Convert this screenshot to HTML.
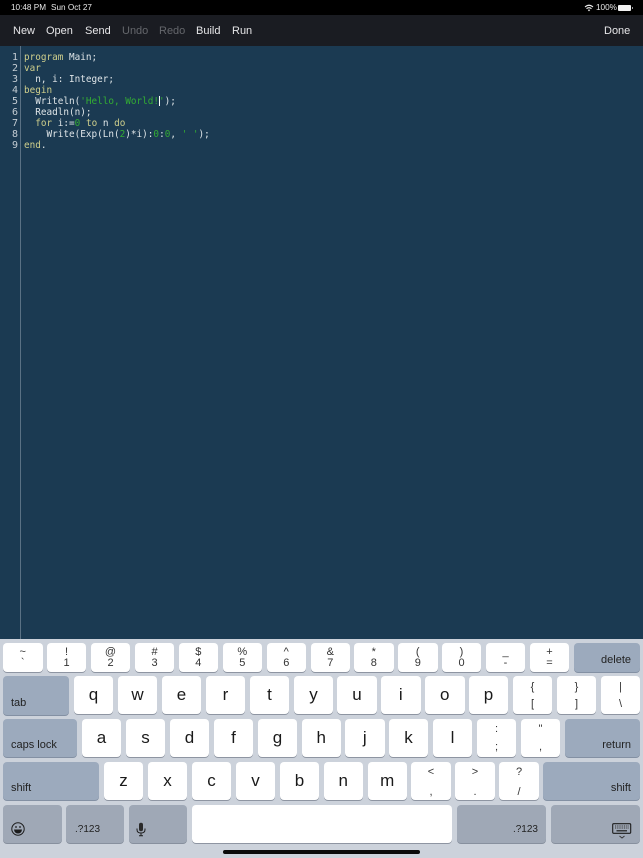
<!DOCTYPE html>
<html><head><meta charset="utf-8"><style>
html,body{margin:0;padding:0;background:#1b3a52}
#r{position:relative;width:643px;height:858px;overflow:hidden;background:#1b3a52;font-family:"Liberation Sans",sans-serif;filter:blur(.3px)}
#r div{position:absolute}
.s{color:#e8e8e8;font-size:8.2px;line-height:10px;top:3px;white-space:nowrap}
.t{color:#e6e6e8;font-size:11px;line-height:14px;top:24px;white-space:nowrap}
.code{left:24px;top:52px;font-family:"DejaVu Sans Mono",monospace;font-size:9.35px;line-height:11px;color:#dfe5e8;white-space:pre}
.nums{left:0;width:18px;top:52px;text-align:right;font-family:"DejaVu Sans Mono",monospace;font-size:10px;line-height:11px;color:#c3ccd3;white-space:pre}
b{font-weight:normal;color:#cfcf8c}i{font-style:normal;color:#33ad33}
.k{background:#fff;border-radius:4px;box-shadow:0 1px 0 #8e95a2;color:#1a1a1a;text-align:center;font-size:17px;line-height:37px}
.g{background:#9caabd;border-radius:4px;box-shadow:0 1px 0 #8390a3}
.d{background:#9fa8b6;border-radius:4px;box-shadow:0 1px 0 #87909e}
.l{color:#222;font-size:11px;line-height:14px;white-space:nowrap}
.n{font-size:10px}
.u,.v{left:0;right:0;text-align:center;font-size:11px;line-height:12px;color:#333}
.r1 .u{top:3px}.r1 .v{top:14px}
.r2 .u{top:5px}.r2 .v{top:22px;}
.r3 .u{top:4px}.r3 .v{top:22px}
.r4 .u{top:4px}.r4 .v{top:24px}
</style></head><body><div id="r">
<div style="left:0;top:0;width:643px;height:15px;background:#000"></div>
<div style="left:0;top:15px;width:643px;height:31px;background:#1a1c22"></div>
<div class="s" style="left:11px">10:48 PM</div><div class="s" style="left:51px">Sun Oct 27</div>
<svg style="position:absolute;left:584px;top:4px" width="10" height="8" viewBox="0 0 10 8"><path d="M1 3Q5-.5 9 3M2.500 4.700Q5 2.700 7.500 4.700" fill="none" stroke="#eee" stroke-width="1.100"/><path d="M3.800 6Q5 5 6.200 6L5 7.400Z" fill="#eee"/></svg>
<div class="s" style="left:596px">100%</div>
<div style="left:618px;top:5px;width:12.500px;height:6px;background:#f2f2f2;border-radius:1px"></div><div style="left:632px;top:7px;width:1px;height:2px;background:#999"></div>
<div class="t" style="left:13px">New</div><div class="t" style="left:46px">Open</div><div class="t" style="left:85px">Send</div>
<div class="t" style="left:122px;color:#65676c">Undo</div><div class="t" style="left:159px;color:#65676c">Redo</div>
<div class="t" style="left:196px">Build</div><div class="t" style="left:232px">Run</div><div class="t" style="left:604px">Done</div>
<div style="left:20px;top:46px;width:1px;height:593px;background:#5a7184"></div>
<div class="nums">1
2
3
4
5
6
7
8
9</div>
<div class="code"><b>program</b> Main;
<b>var</b>
  n, i: Integer;
<b>begin</b>
  Writeln(<i>'Hello, World!'</i>);
  Readln(n);
  <b>for</b> i:=<i>0</i> <b>to</b> n <b>do</b>
    Write(Exp(Ln(<i>2</i>)*i):<i>0</i>:<i>0</i>, <i>' '</i>);
<b>end</b>.</div>
<div style="left:159px;top:96px;width:1px;height:10px;background:#fff"></div>

<div style="left:0;top:639px;width:643px;height:219px;background:#ccd2db"></div>

<div class="k r1" style="left:3px;top:643px;width:39.500px;height:29px"><div class="u">~</div><div class="v">`</div></div>
<div class="k r1" style="left:47px;top:643px;width:39px;height:29px"><div class="u">!</div><div class="v">1</div></div>
<div class="k r1" style="left:91px;top:643px;width:39px;height:29px"><div class="u">@</div><div class="v">2</div></div>
<div class="k r1" style="left:135px;top:643px;width:39px;height:29px"><div class="u">#</div><div class="v">3</div></div>
<div class="k r1" style="left:178.500px;top:643px;width:39.500px;height:29px"><div class="u">$</div><div class="v">4</div></div>
<div class="k r1" style="left:222.500px;top:643px;width:39.500px;height:29px"><div class="u">%</div><div class="v">5</div></div>
<div class="k r1" style="left:266.500px;top:643px;width:39.500px;height:29px"><div class="u">^</div><div class="v">6</div></div>
<div class="k r1" style="left:310.500px;top:643px;width:39.500px;height:29px"><div class="u">&amp;</div><div class="v">7</div></div>
<div class="k r1" style="left:354px;top:643px;width:39.500px;height:29px"><div class="u">*</div><div class="v">8</div></div>
<div class="k r1" style="left:398px;top:643px;width:39.500px;height:29px"><div class="u">(</div><div class="v">9</div></div>
<div class="k r1" style="left:442px;top:643px;width:39px;height:29px"><div class="u">)</div><div class="v">0</div></div>
<div class="k r1" style="left:486px;top:643px;width:39px;height:29px"><div class="u">_</div><div class="v">-</div></div>
<div class="k r1" style="left:530px;top:643px;width:39px;height:29px"><div class="u">+</div><div class="v">=</div></div>
<div class="g" style="left:574px;top:643px;width:66px;height:29px"></div><div class="l" style="right:12px;top:653px">delete</div>

<div class="g" style="left:3px;top:676px;width:66px;height:38.500px"></div><div class="l" style="left:11px;top:696px">tab</div>
<div class="k" style="left:74px;top:676px;width:39px;height:38px">q</div>
<div class="k" style="left:118px;top:676px;width:39px;height:38px">w</div>
<div class="k" style="left:162px;top:676px;width:39px;height:38px">e</div>
<div class="k" style="left:206px;top:676px;width:39px;height:38px">r</div>
<div class="k" style="left:250px;top:676px;width:39px;height:38px">t</div>
<div class="k" style="left:294px;top:676px;width:39px;height:38px">y</div>
<div class="k" style="left:337px;top:676px;width:40px;height:38px">u</div>
<div class="k" style="left:381px;top:676px;width:39.500px;height:38px">i</div>
<div class="k" style="left:425px;top:676px;width:39.500px;height:38px">o</div>
<div class="k" style="left:469px;top:676px;width:39px;height:38px">p</div>
<div class="k r2" style="left:513px;top:676px;width:39px;height:38px"><div class="u">{</div><div class="v">[</div></div>
<div class="k r2" style="left:557px;top:676px;width:39px;height:38px"><div class="u">}</div><div class="v">]</div></div>
<div class="k r2" style="left:601px;top:676px;width:39px;height:38px"><div class="u">|</div><div class="v">\</div></div>

<div class="g" style="left:3px;top:719px;width:74px;height:38px"></div><div class="l" style="left:11px;top:738px">caps lock</div>
<div class="k" style="left:82px;top:719px;width:39px;height:38px">a</div>
<div class="k" style="left:126px;top:719px;width:39px;height:38px">s</div>
<div class="k" style="left:170px;top:719px;width:39px;height:38px">d</div>
<div class="k" style="left:214px;top:719px;width:39px;height:38px">f</div>
<div class="k" style="left:258px;top:719px;width:39px;height:38px">g</div>
<div class="k" style="left:302px;top:719px;width:38.500px;height:38px">h</div>
<div class="k" style="left:345px;top:719px;width:39.500px;height:38px">j</div>
<div class="k" style="left:389px;top:719px;width:39px;height:38px">k</div>
<div class="k" style="left:433px;top:719px;width:39px;height:38px">l</div>
<div class="k r3" style="left:477px;top:719px;width:39px;height:38px"><div class="u">:</div><div class="v">;</div></div>
<div class="k r3" style="left:521px;top:719px;width:39px;height:38px"><div class="u">"</div><div class="v">,</div></div>
<div class="g" style="left:565px;top:719px;width:75px;height:38px"></div><div class="l" style="right:12px;top:738px">return</div>

<div class="g" style="left:3px;top:762px;width:96px;height:38px"></div><div class="l" style="left:11px;top:781px">shift</div>
<div class="k" style="left:104px;top:762px;width:39px;height:38px">z</div>
<div class="k" style="left:148px;top:762px;width:39px;height:38px">x</div>
<div class="k" style="left:192px;top:762px;width:39px;height:38px">c</div>
<div class="k" style="left:236px;top:762px;width:39px;height:38px">v</div>
<div class="k" style="left:280px;top:762px;width:39px;height:38px">b</div>
<div class="k" style="left:323.500px;top:762px;width:39.500px;height:38px">n</div>
<div class="k" style="left:367.500px;top:762px;width:39.500px;height:38px">m</div>
<div class="k r4" style="left:411px;top:762px;width:40px;height:38px"><div class="u">&lt;</div><div class="v">,</div></div>
<div class="k r4" style="left:455px;top:762px;width:40px;height:38px"><div class="u">&gt;</div><div class="v">.</div></div>
<div class="k r4" style="left:499px;top:762px;width:40px;height:38px"><div class="u">?</div><div class="v">/</div></div>
<div class="g" style="left:543px;top:762px;width:97px;height:38px"></div><div class="l" style="right:12px;top:781px">shift</div>

<div class="d" style="left:3px;top:805px;width:59px;height:38px"></div>
<div class="d" style="left:66px;top:805px;width:58px;height:38px"></div><div class="l n" style="left:75px;top:823px">.?123</div>
<div class="d" style="left:129px;top:805px;width:58px;height:38px"></div>
<div class="k" style="left:192px;top:805px;width:260px;height:38px"></div>
<div class="d" style="left:457px;top:805px;width:89px;height:38px"></div><div class="l n" style="right:105px;top:823px">.?123</div>
<div class="d" style="left:551px;top:805px;width:89px;height:38px"></div>

<svg style="position:absolute;left:11px;top:822px" width="14" height="14" viewBox="0 0 14 14"><circle cx="7" cy="7" r="6.200" fill="none" stroke="#1c1c1c" stroke-width="1"/><circle cx="5" cy="5" r=".9" fill="#1c1c1c"/><circle cx="9" cy="5" r=".9" fill="#1c1c1c"/><path d="M3 7.500H11Q10.500 11.500 7 11.500T3 7.500Z" fill="#1c1c1c"/></svg>
<svg style="position:absolute;left:136px;top:822px" width="10" height="15" viewBox="0 0 10 15"><rect x="3" y=".7" width="4" height="8.600" rx="2" fill="#2a2a2a"/><path d="M1 6.500V7.500Q1 11 5 11T9 7.500V6.500M5 11V13.500M3 13.800H7" fill="none" stroke="#1c1c1c" stroke-width="1"/></svg>
<svg style="position:absolute;left:612px;top:823px" width="20" height="17" viewBox="0 0 20 17"><rect x=".7" y=".7" width="18" height="9.600" rx="1" fill="none" stroke="#1c1c1c" stroke-width="1.100"/><path d="M3 3H17M3 5H17" stroke="#333" stroke-width="1.100" stroke-dasharray="1 .8"/><path d="M4.500 7.800H15" stroke="#1c1c1c" stroke-width="1.200"/><path d="M7.500 13L10 15L12.500 13" fill="none" stroke="#333" stroke-width=".9"/></svg>
<div style="left:223px;top:850px;width:197px;height:3.500px;border-radius:2px;background:#0a0a0a"></div>
</div></body></html>
